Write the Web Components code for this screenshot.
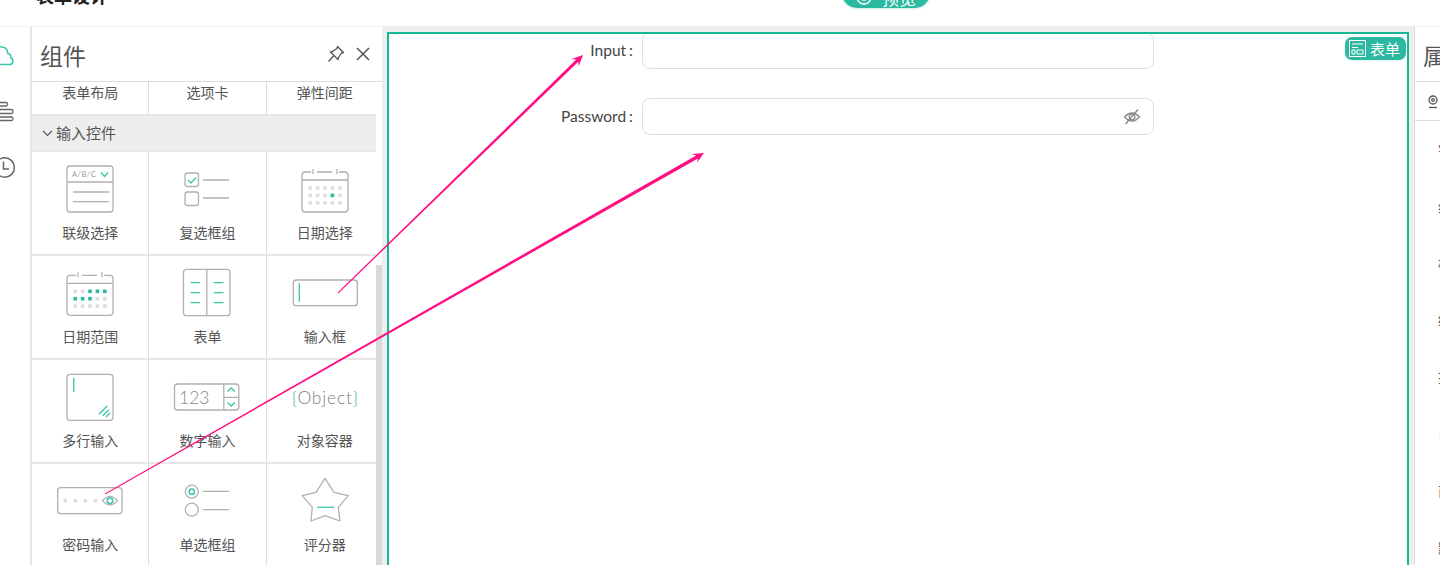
<!DOCTYPE html>
<html>
<head>
<meta charset="utf-8">
<title>表单设计</title>
<style>
  html, body { margin: 0; height: 100%; overflow: hidden; background: #fff; }
  body { font-family: "Lato", "Noto Sans CJK SC", sans-serif; color: #555; }
</style>
</head>
<body>
<form-designer>
  <top-bar></top-bar>
  <side-rail></side-rail>
  <widget-panel>
    <widget-grid class="clipped">
      <widget-cell name="表单布局"></widget-cell>
      <widget-cell name="选项卡"></widget-cell>
      <widget-cell name="弹性间距"></widget-cell>
    </widget-grid>
    <group-title>输入控件</group-title>
    <widget-grid>
      <widget-cell name="联级选择" icon="cascader"></widget-cell>
      <widget-cell name="复选框组" icon="checkbox"></widget-cell>
      <widget-cell name="日期选择" icon="date"></widget-cell>
      <widget-cell name="日期范围" icon="range"></widget-cell>
      <widget-cell name="表单" icon="form"></widget-cell>
      <widget-cell name="输入框" icon="input"></widget-cell>
      <widget-cell name="多行输入" icon="textarea"></widget-cell>
      <widget-cell name="数字输入" icon="number"></widget-cell>
      <widget-cell name="对象容器" icon="object"></widget-cell>
      <widget-cell name="密码输入" icon="password"></widget-cell>
      <widget-cell name="单选框组" icon="radio"></widget-cell>
      <widget-cell name="评分器" icon="rate"></widget-cell>
    </widget-grid>
  </widget-panel>
  <design-canvas>
    <form-row label="Input"></form-row>
    <form-row label="Password" secret></form-row>
  </design-canvas>
  <prop-panel></prop-panel>
  <arrow-overlay></arrow-overlay>
</form-designer>

<script>
  const LINE = '#b0b0b0';
  const TEAL = '#3cc4ab';

  function calendar(y, active){
    let dots = '';
    [25.2, 32.6, 40, 47.4, 54.8].forEach((x, c) => {
      [28, 35.4, 42.8].forEach((dy, r) => {
        const on = active.includes(r * 5 + c);
        dots += `<rect x="${x - 1.8}" y="${dy + y - 1.8}" width="3.6" height="3.6" stroke="none" fill="${on ? '#2bb9a0' : '#ddd'}"/>`;
      });
    });
    return `<path d="M26 ${y + 12}h-6a3 3 0 0 0-3 3v34a3 3 0 0 0 3 3h40a3 3 0 0 0 3-3v-34a3 3 0 0 0-3-3h-6M32 ${y + 12}h15M17 ${y + 20}h46M28 ${y + 9}v5M52 ${y + 9}v5"/>${dots}`;
  }

  const ICONS = {
    cascader: `<rect x="17" y="6" width="46" height="46" rx="3"/><path d="M17 22h46M23 32h36M23 41.600h36"/>
      <text x="22" y="17" font-size="7.500" letter-spacing=".5" fill="#999" stroke="none" font-family="Lato">A/B/C</text>
      <path d="M51 12.500l3.500 4 3.500-4" stroke="${TEAL}"/>`,
    checkbox: `<rect x="18" y="13" width="13.500" height="13.500" rx="2.500"/><rect x="18" y="32" width="13.500" height="13.500" rx="2.500"/>
      <path d="M36 20h26M36 38h26"/><path d="M21 20l3 3 5-5.500" stroke="${TEAL}"/>`,
    date: calendar(0, [8]),
    range: calendar(-0.7, [2, 3, 4, 5, 6, 7]),
    form: `<rect x="16.500" y="5.300" width="46.500" height="46.400" rx="3"/><path d="M39.800 5.300v46.400"/>
      <path d="M23.500 18.700h9.500M23.500 28.700h9.500M23.500 38.700h9.500M46.800 18.700h9.700M46.800 28.700h9.700M46.800 38.700h9.700" stroke="${TEAL}"/>`,
    input: `<rect x="8.300" y="16" width="64" height="25.700" rx="3"/><path d="M14.300 19.300v18.400" stroke="${TEAL}"/>`,
    textarea: `<rect x="17" y="6.300" width="46" height="46" rx="3"/><path d="M23.700 9.700v14M49 46.300l8.300-8.600M52.700 47.700l6-5.700M56 49l4-4" stroke="${TEAL}"/>`,
    number: `<rect x="7.500" y="16" width="64.300" height="26" rx="3"/><path d="M56.800 16v26M56.800 29.300h15"/>
      <text x="12" y="36" font-size="17.500" font-weight="300" fill="#888" stroke="none" font-family="Lato">123</text>
      <path d="M60.500 23.500l3.700-3.500 3.700 3.500M60.500 34.500l3.700 3.500 3.700-3.500" stroke="${TEAL}"/>`,
    object: `<text x="40.300" y="36" text-anchor="middle" font-size="17.500" font-weight="300" letter-spacing=".8" fill="#808080" stroke="none" font-family="Lato"><tspan fill="#1fb89c">{</tspan>Object<tspan fill="#1fb89c">}</tspan></text>`,
    password: `<rect x="7.700" y="15.700" width="64.300" height="26" rx="3"/>
      <g fill="#ddd" stroke="none"><circle cx="15.300" cy="28.700" r="2"/><circle cx="25.300" cy="28.700" r="2"/><circle cx="35.300" cy="28.700" r="2"/><circle cx="45.300" cy="28.700" r="2"/></g>
      <path d="M52.600 28.700q7.400-8.600 14.800 0q-7.400 8.600-14.800 0z"/><circle cx="60" cy="28.700" r="2.700" stroke="${TEAL}" stroke-width="1.500"/>`,
    radio: `<circle cx="24.800" cy="19.700" r="6.500"/><circle cx="24.800" cy="37.700" r="6.500"/><circle cx="24.800" cy="19.700" r="2.600" stroke="${TEAL}" stroke-width="1.500"/><path d="M36 19.300h26M36 37.700h26"/>`,
    rate: `<path stroke-linejoin="round" d="M40 6.300L49 20.300L63.300 23.700L53.300 35.300L55 49L40 43.700L26 49L27.300 35.300L17.300 23.700L31 20.300z"/><path d="M32.300 35.300h16.700" stroke="${TEAL}"/>`
  };

  class TopBar extends HTMLElement {
    constructor(){
      super();
      this.attachShadow({mode: 'open'}).innerHTML = `
        <style>
          :host { grid-column: 1 / -1; display: flex; height: 26px; border-bottom: 1px solid #eee; overflow: hidden; position: relative; background: #fff; }
          .title { margin: -18px 0 0 36px; height: 26px; font: bold 18px/26px "Noto Sans CJK SC", sans-serif; color: #222; width: 80px; }
          .preview { margin: -22px 0 0 726px; width: 88px; height: 30px; box-sizing: border-box; padding-top: 8px; background: #2bb9a0; color: #fff; border-radius: 15px; display: flex; align-items: center; justify-content: center; gap: 10px; font: 17px "Noto Sans CJK SC", sans-serif; box-shadow: 0 1px 2px rgba(43,185,160,.25); }
          svg { display: block; flex: none; }
        </style>
        <div class="title">表单设计</div>
        <div class="preview">
          <svg width="16" height="16" viewBox="0 0 16 16" fill="none" stroke="#fff" stroke-width="1.400"><circle cx="8" cy="8" r="7"/><circle cx="8" cy="8" r="3"/></svg>
          <span>预览</span>
        </div>`;
    }
  }

  class SideRail extends HTMLElement {
    constructor(){
      super();
      this.attachShadow({mode: 'open'}).innerHTML = `
        <style>
          :host { display: block; height: 100%; background: #fff; border-right: 2px solid #e4e4e4; overflow: hidden; }
          svg { display: block; }
        </style>
        <svg width="30" height="170" viewBox="0 0 30 170" fill="none" stroke-width="1.500">
          <path stroke="#3cc4ab" stroke-linejoin="round" d="M-6 37.500h15a3.500 3.500 0 0 0 1.500-6.800a3 3 0 0 0-3-4.200a5.500 5.500 0 0 0-5.500-6.500a6 6 0 0 0-6.500 3"/>
          <g stroke="#666" stroke-width="1.300">
            <rect x="-4" y="75.500" width="11.500" height="3.500" rx="1.500"/>
            <rect x="-4" y="82.500" width="17" height="4" rx="1.500"/>
            <rect x="-4" y="90" width="17" height="3.500" rx="1.500"/>
          </g>
          <g stroke="#666">
            <circle cx="4.700" cy="140.500" r="9.700"/>
            <path d="M3.500 134.500v7.500h5.500"/>
          </g>
        </svg>`;
    }
  }

  class WidgetPanel extends HTMLElement {
    constructor(){
      super();
      this.attachShadow({mode: 'open'}).innerHTML = `
        <style>
          :host { display: flex; flex-direction: column; height: 100%; background: #fff; position: relative; overflow: hidden; }
          header { height: 54px; flex: none; border-bottom: 1px solid #ddd; display: flex; align-items: center; padding: 0 12px 0 8px; color: #555; }
          h2 { margin: 0 0 -2px; flex: 1; font: 400 23px "Noto Sans CJK SC", sans-serif; color: #555; }
          svg { display: block; }
          .pin { margin-right: 11px; }
          .scroller { flex: 1; width: 344px; overflow: hidden; }
          .thumb { position: absolute; left: 344px; top: 238px; bottom: 0; width: 6px; background: #d9d9d9; }
        </style>
        <header>
          <h2>组件</h2>
          <svg class="pin" width="18" height="18" viewBox="0 0 18 18" fill="none" stroke="#555" stroke-width="1.300" stroke-linejoin="round"><path d="M10.500 1.500L16.500 7.500L14.500 8L11.500 12.500L11 14.500L3.500 7L5.500 6.500L10 3.500zM7 10.500L1.500 16.500"/></svg>
          <svg width="14" height="14" viewBox="0 0 14 14" fill="none" stroke="#555" stroke-width="1.500"><path d="M1 1l12 12M13 1L1 13"/></svg>
        </header>
        <div class="scroller"><slot></slot></div>
        <div class="thumb"></div>`;
    }
  }

  class WidgetGrid extends HTMLElement {
    constructor(){
      super();
      this.attachShadow({mode: 'open'}).innerHTML = `
        <style>
          :host { display: grid; grid-template-columns: repeat(3, 117.330px); width: 352px; }
          :host(.clipped) { margin-top: -70px; }
        </style>
        <slot></slot>`;
    }
  }

  class WidgetCell extends HTMLElement {
    connectedCallback(){
      if(this.shadowRoot) return;
      const icon = ICONS[this.getAttribute('icon')] || '';
      this.attachShadow({mode: 'open'}).innerHTML = `
        <style>
          :host { display: flex; flex-direction: column; align-items: center; box-sizing: border-box; height: 104px; border-right: 1px solid #ddd; border-bottom: 2px solid #e6e6e6; padding-top: 8px; }
          svg { display: block; }
          span { margin-top: 2px; font: 14px/20px "Noto Sans CJK SC", sans-serif; color: #555; }
        </style>
        <svg width="80" height="60" viewBox="0 0 80 60" fill="none" stroke="${LINE}" stroke-width="1.300">${icon}</svg>
        <span>${this.getAttribute('name')}</span>`;
    }
  }

  class GroupTitle extends HTMLElement {
    constructor(){
      super();
      this.attachShadow({mode: 'open'}).innerHTML = `
        <style>
          :host { display: flex; align-items: center; box-sizing: border-box; height: 36px; background: #eee; border-bottom: 2px solid #e6e6e6; padding: 0 0 1px 10px; gap: 3px; font: 15px "Noto Sans CJK SC", sans-serif; color: #555; }
          svg { display: block; margin-top: 2px; }
        </style>
        <svg width="11" height="7" viewBox="0 0 11 7" fill="none" stroke="#555" stroke-width="1.200"><path d="M1 1l4.500 4.500L10 1"/></svg>
        <slot></slot>`;
    }
  }

  class DesignCanvas extends HTMLElement {
    constructor(){
      super();
      this.attachShadow({mode: 'open'}).innerHTML = `
        <style>
          :host { display: block; position: relative; box-sizing: border-box; height: 600px; margin: 5px 5px 0; background: #fff; border: 2px solid #17b897; overflow: hidden; }
          .form { display: flex; flex-direction: column; gap: 29px; margin-top: -2px; }
          .tag { position: absolute; top: 3px; right: 1px; width: 61px; height: 23px; box-sizing: border-box; padding-left: 4px; background: #2db8a2; border-radius: 7px; color: #fff; display: flex; align-items: center; gap: 4px; font: 15px "Noto Sans CJK SC", sans-serif; box-shadow: 0 1px 2px rgba(45,184,162,.15); }
          svg { display: block; flex: none; }
        </style>
        <div class="form"><slot></slot></div>
        <div class="tag">
          <svg width="17" height="17" viewBox="0 0 17 17" fill="none" stroke="#fff" stroke-width="1"><rect x=".5" y=".5" width="16" height="16"/><path d="M3 4h11M3 7.500h6M3 10h3v4H3zM8 10h6v4H8z"/></svg>
          <span>表单</span>
        </div>`;
    }
  }

  class FormRow extends HTMLElement {
    connectedCallback(){
      if(this.shadowRoot) return;
      const eye = this.hasAttribute('secret') ? `
        <svg width="18" height="18" viewBox="0 0 18 18" fill="none" stroke="#888" stroke-width="1.300"><path d="M1.500 9q7.500-8 15 0q-7.500 8-15 0z"/><circle cx="9" cy="9" r="2.800"/><path d="M15 1.500L2.500 16"/></svg>` : '';
      this.attachShadow({mode: 'open'}).innerHTML = `
        <style>
          :host { display: grid; grid-template-columns: 244px 512px; column-gap: 9px; align-items: center; }
          label { display: flex; justify-content: flex-end; gap: 3px; padding-bottom: 1px; font: 15.500px "Lato", sans-serif; color: #444; }
          .box { box-sizing: border-box; height: 37px; border: 1px solid #dcdfe6; border-radius: 8px; background: #fff; display: flex; align-items: center; justify-content: flex-end; padding-right: 12px; }
          svg { display: block; }
        </style>
        <label><span>${this.getAttribute('label')}</span><span>:</span></label>
        <div class="box">${eye}</div>`;
    }
  }

  class PropPanel extends HTMLElement {
    constructor(){
      super();
      const names = ['字段名称', '组件类型', '标题', '绑定字段', '提示文字', '占位内容', '前缀', '默认值'];
      this.attachShadow({mode: 'open'}).innerHTML = `
        <style>
          :host { display: block; height: 100%; width: 340px; background: #fff; border-left: 1px solid #ddd; overflow: hidden; }
          header { box-sizing: border-box; height: 55px; padding-left: 8px; border-bottom: 1px solid #ddd; font: 23px/56px "Noto Sans CJK SC", sans-serif; color: #555; }
          .tabs { box-sizing: border-box; height: 39px; border-bottom: 1px solid #ddd; display: flex; align-items: center; padding: 1px 0 0 12px; }
          .row { box-sizing: border-box; height: 56.800px; padding: 18px 0 0 23px; font: 14px/20px "Noto Sans CJK SC", sans-serif; color: #555; }
          svg { display: block; }
        </style>
        <header>属性配置</header>
        <div class="tabs">
          <svg width="12" height="14" viewBox="0 0 12 14" fill="none" stroke="#555" stroke-width="1.300"><circle cx="6" cy="5" r="4"/><circle cx="6" cy="5" r="1.300"/><path d="M2 12.500h8"/></svg>
        </div>
        ${names.map(n => `<div class="row">${n}</div>`).join('')}`;
    }
  }

  class ArrowOverlay extends HTMLElement {
    constructor(){
      super();
      const shape = (x1, y1, x2, y2, w0, w1, len, half) => {
        const d = Math.hypot(x2 - x1, y2 - y1);
        const ux = (x2 - x1) / d, uy = (y2 - y1) / d;
        const nx = -uy, ny = ux;
        const bx = x2 - ux * len, by = y2 - uy * len;
        const p = (x, y, o) => `${(x + nx * o).toFixed(1)},${(y + ny * o).toFixed(1)}`;
        return [p(x1, y1, w0 / 2), p(bx, by, w1 / 2), p(bx - ux * 3, by - uy * 3, half), p(x2, y2, 0), p(bx - ux * 3, by - uy * 3, -half), p(bx, by, -w1 / 2), p(x1, y1, -w0 / 2)].join(' ');
      };
      this.attachShadow({mode: 'open'}).innerHTML = `
        <style>
          :host { position: absolute; inset: 0; pointer-events: none; }
          svg { display: block; }
        </style>
        <svg width="1440" height="565" viewBox="0 0 1440 565" fill="#ff0f80">
          <polygon points="${shape(338, 293, 583, 55, 1, 3, 8, 5)}"/>
          <polygon points="${shape(105, 494, 704, 153, 1, 3.400, 8, 5)}"/>
        </svg>`;
    }
  }

  class FormDesigner extends HTMLElement {
    constructor(){
      super();
      this.attachShadow({mode: 'open'}).innerHTML = `
        <style>
          :host { display: grid; grid-template-columns: 32px 350px 1032px 26px; grid-template-rows: 27px 538px; height: 565px; background: #eee; position: relative; overflow: hidden; }
        </style>
        <slot></slot>`;
    }
  }

  customElements.define('top-bar', TopBar);
  customElements.define('side-rail', SideRail);
  customElements.define('widget-panel', WidgetPanel);
  customElements.define('widget-grid', WidgetGrid);
  customElements.define('widget-cell', WidgetCell);
  customElements.define('group-title', GroupTitle);
  customElements.define('design-canvas', DesignCanvas);
  customElements.define('form-row', FormRow);
  customElements.define('prop-panel', PropPanel);
  customElements.define('arrow-overlay', ArrowOverlay);
  customElements.define('form-designer', FormDesigner);
</script>
</body>
</html>
